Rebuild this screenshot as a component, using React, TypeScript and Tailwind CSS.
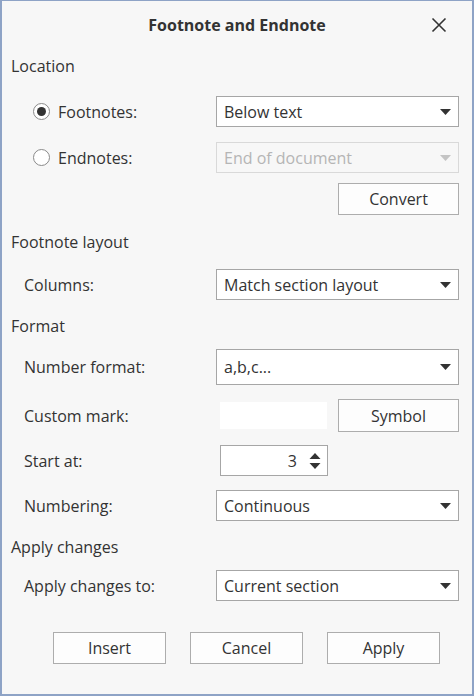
import React from 'react'

const font = { fontFamily: '"Segoe UI", "Open Sans", "Noto Sans", sans-serif' }

function Caret({ disabled = false }: { disabled?: boolean }) {
    return (
        <svg width="11" height="6" viewBox="0 0 11 6" className="shrink-0">
            <path d="M0 0 L11 0 L5.5 6 Z" fill={disabled ? '#c4c4c4' : '#333333'} />
        </svg>
    )
}

function Select({ value, disabled = false, tall = false }: { value: string; disabled?: boolean; tall?: boolean }) {
    return (
        <div
            className={`w-[243px] ${tall ? 'h-[36px]' : 'h-[31px]'} flex items-center justify-between pl-[7px] pr-[7px] border ${
                disabled ? 'border-[#d9d9d9] bg-[#f7f7f7] text-[#b5b5b5]' : 'border-[#a6a6a6] bg-white text-[#333]'
            }`}
        >
            <span>{value}</span>
            <Caret disabled={disabled} />
        </div>
    )
}

function Button({ label, className = '' }: { label: string; className?: string }) {
    return (
        <button className={`h-[32px] border border-[#adadad] bg-[#fdfdfd] text-[#333] flex items-center justify-center ${className}`}>
            {label}
        </button>
    )
}

function Radio({ checked }: { checked: boolean }) {
    return (
        <span className="w-[17px] h-[17px] rounded-full border border-[#8a8a8a] bg-white flex items-center justify-center shrink-0">
            {checked && <span className="w-[9px] h-[9px] rounded-full bg-[#333]" />}
        </span>
    )
}

export default function App() {
    return (
        <div
            style={font}
            className="w-[474px] h-[696px] bg-[#f7f7f7] border-t border-l-2 border-r-2 border-b-2 border-[#8ea3c6] text-[16px] leading-[22px] text-[#333] flex flex-col"
        >
            {/* Title bar */}
            <div className="h-[47px] shrink-0 flex items-center justify-center relative">
                <span className="font-bold text-[16px]">Footnote and Endnote</span>
                <svg width="16" height="16" viewBox="0 0 16 16" className="absolute right-[25px] top-[16px]">
                    <path d="M1.5 1.5 L14.5 14.5 M14.5 1.5 L1.5 14.5" stroke="#333" strokeWidth="1.6" />
                </svg>
            </div>

            <div className="flex flex-col pl-[9px] pr-[13px]">
                {/* Location */}
                <div className="mt-[7px] h-[22px]">Location</div>

                <div className="mt-[19px] h-[31px] flex items-center">
                    <div className="flex items-center gap-[8px] pl-[22px]">
                        <Radio checked />
                        <span>Footnotes:</span>
                    </div>
                    <div className="ml-auto">
                        <Select value="Below text" />
                    </div>
                </div>

                <div className="mt-[15px] h-[31px] flex items-center">
                    <div className="flex items-center gap-[8px] pl-[22px]">
                        <Radio checked={false} />
                        <span>Endnotes:</span>
                    </div>
                    <div className="ml-auto">
                        <Select value="End of document" disabled />
                    </div>
                </div>

                <div className="mt-[10px] flex justify-end">
                    <Button label="Convert" className="w-[121px]" />
                </div>

                {/* Footnote layout */}
                <div className="mt-[16px] h-[22px]">Footnote layout</div>

                <div className="mt-[16px] h-[31px] flex items-center">
                    <span className="pl-[13px]">Columns:</span>
                    <div className="ml-auto">
                        <Select value="Match section layout" />
                    </div>
                </div>

                {/* Format */}
                <div className="mt-[15px] h-[22px]">Format</div>

                <div className="mt-[12px] h-[36px] flex items-center">
                    <span className="pl-[13px]">Number format:</span>
                    <div className="ml-auto">
                        <Select value="a,b,c..." tall />
                    </div>
                </div>

                <div className="mt-[14px] h-[33px] flex items-center">
                    <span className="pl-[13px]">Custom mark:</span>
                    <div className="ml-auto flex items-center">
                        <div className="w-[107px] h-[27px] bg-white" />
                        <Button label="Symbol" className="w-[121px] h-[33px] ml-[11px]" />
                    </div>
                </div>

                <div className="mt-[13px] h-[31px] flex items-center">
                    <span className="pl-[13px]">Start at:</span>
                    <div className="ml-auto w-[239px]">
                        <div className="w-[108px] h-[31px] border border-[#a6a6a6] bg-white flex items-center justify-end pr-[6px] gap-[12px]">
                            <span>3</span>
                            <svg width="12" height="18" viewBox="0 0 12 18">
                                <path d="M0.5 7 L11.5 7 L6 1 Z" fill="#333" />
                                <path d="M0.5 11 L11.5 11 L6 17 Z" fill="#333" />
                            </svg>
                        </div>
                    </div>
                </div>

                <div className="mt-[14px] h-[31px] flex items-center">
                    <span className="pl-[13px]">Numbering:</span>
                    <div className="ml-auto">
                        <Select value="Continuous" />
                    </div>
                </div>

                {/* Apply changes */}
                <div className="mt-[15px] h-[22px]">Apply changes</div>

                <div className="mt-[12px] h-[31px] flex items-center">
                    <span className="pl-[13px]">Apply changes to:</span>
                    <div className="ml-auto">
                        <Select value="Current section" />
                    </div>
                </div>

                {/* Footer buttons */}
                <div className="mt-[31px] flex gap-[24px] pl-[42px]">
                    <Button label="Insert" className="w-[113px] h-[31px]" />
                    <Button label="Cancel" className="w-[113px] h-[31px]" />
                    <Button label="Apply" className="w-[113px] h-[31px]" />
                </div>
            </div>
        </div>
    )
}
